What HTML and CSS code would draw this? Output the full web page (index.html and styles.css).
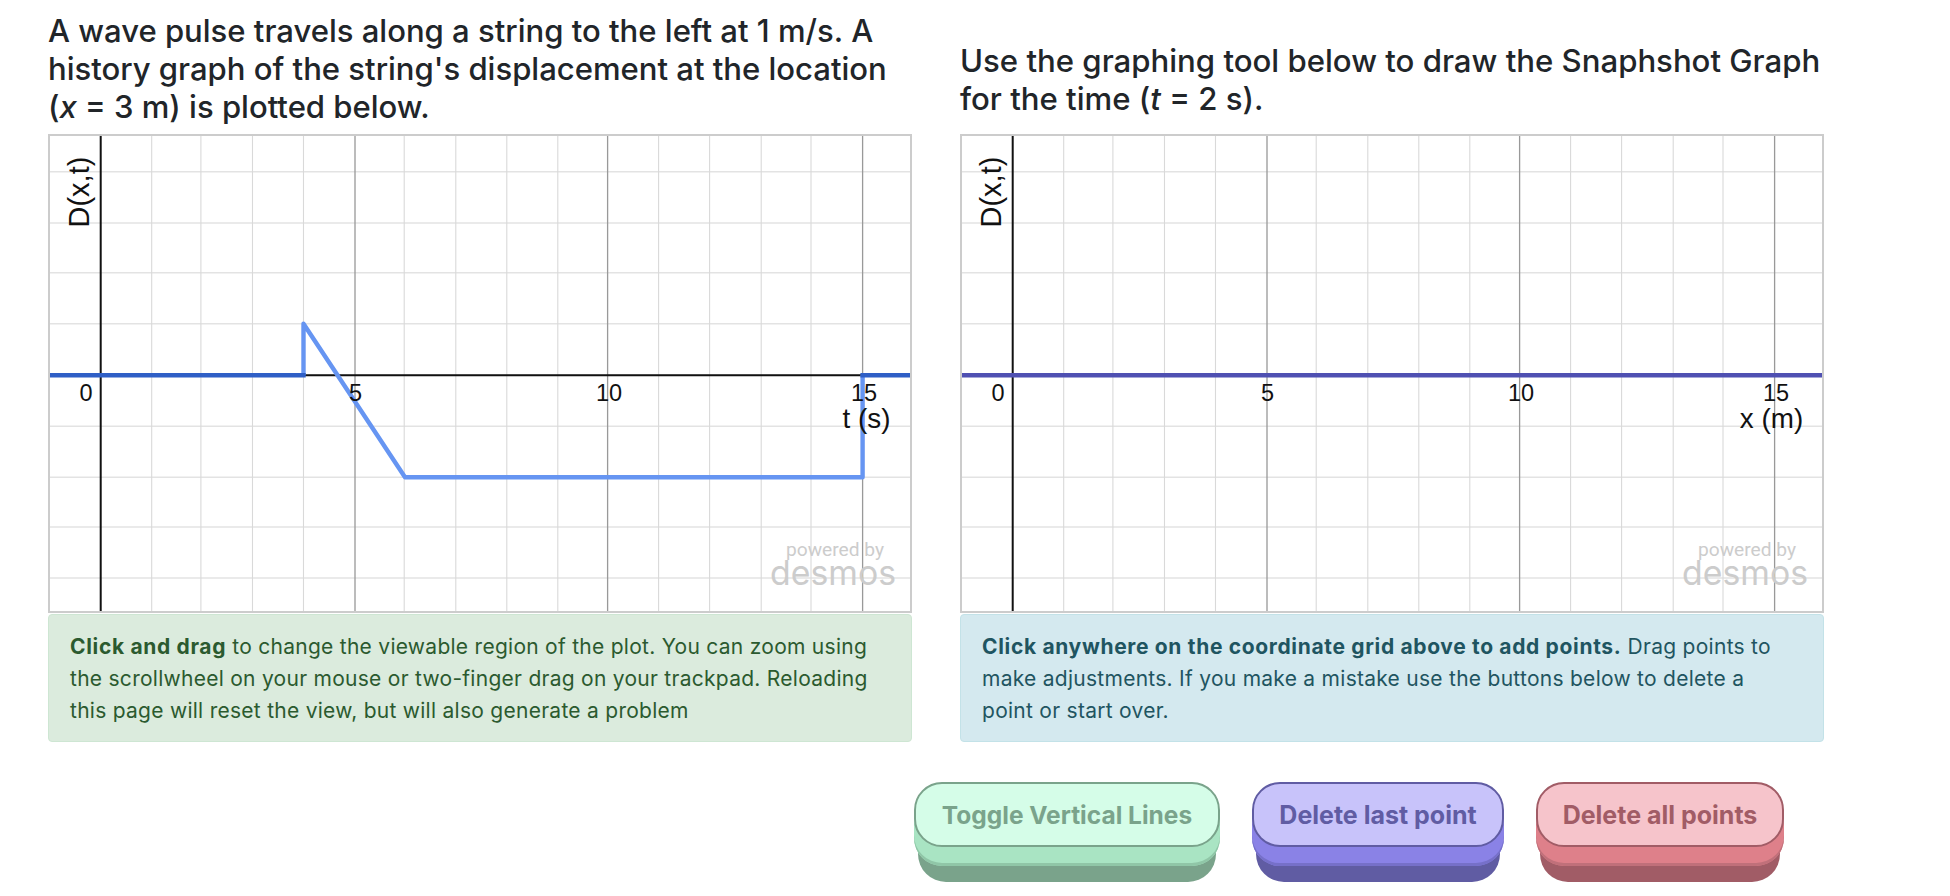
FILE: index.html
```html
<!DOCTYPE html>
<html lang="en">
<head>
<meta charset="utf-8">
<title>Snapshot Graph</title>
<link rel="stylesheet" href="styles.css">
</head>
<body>
<svg class="defs" width="0" height="0" aria-hidden="true">
  <defs>
    <g id="grid">
      <path class="minor-h" d="M-1 36.7H864M-1 88H864M-1 137.7H864M-1 188.7H864M-1 240.3H864M-1 291.3H864M-1 342.3H864M-1 392H864M-1 443H864"/>
      <path class="minor-v" d="M102.7 -1V480M151.9 -1V480M203.5 -1V480M254.5 -1V480M355.2 -1V480M406.8 -1V480M457.8 -1V480M508.8 -1V480M609.6 -1V480M660.6 -1V480M712.2 -1V480M762 -1V480"/>
      <path class="major-v" d="M306 -1V480M558.6 -1V480M813.6 -1V480"/>
      <path class="axis" d="M51.7 -1V480M-1 240.3H864"/>
    </g>
    <g id="brand">
      <text class="powered" x="737" y="421" textLength="98" lengthAdjust="spacingAndGlyphs">powered by</text>
      <text class="desmos" x="721" y="449.5" textLength="126" lengthAdjust="spacingAndGlyphs">desmos</text>
    </g>
  </defs>
</svg>
<main class="page">
  <section class="columns">
    <h1 class="prompt">A wave pulse travels along a string to the left at 1 m/s. A history graph of the string's displacement at the location (<i>x</i> = 3 m) is plotted below.</h1>
    <h1 class="prompt prompt-right">Use the graphing tool below to draw the Snaphshot Graph for the time (<i>t</i> = 2 s).</h1>

    <div class="graph">
      <svg viewBox="-1 -1 864 479" width="864" height="479">
        <use href="#grid"/>
        <path class="trace history" d="M254.5 240.3V188.7L356 342.3H813.6V240.3"/>
        <path class="trace on-axis" d="M-1 240.3H256.7M811.4 240.3H863"/>
        <text class="ylabel" transform="translate(40 92.5) rotate(-90)">D(x,t)</text>
        <text class="tick" x="37" y="266">0</text>
        <text class="tick" x="306.5" y="266">5</text>
        <text class="tick" x="560" y="266">10</text>
        <text class="tick" x="815" y="266">15</text>
        <text class="xlabel" x="817.5" y="293">t (s)</text>
        <use href="#brand"/>
      </svg>
    </div>
    <div class="graph">
      <svg viewBox="-1 -1 864 479" width="864" height="479">
        <use href="#grid"/>
        <path class="trace snapshot" d="M-1 240.3H863"/>
        <text class="ylabel" transform="translate(40 92.5) rotate(-90)">D(x,t)</text>
        <text class="tick" x="37" y="266">0</text>
        <text class="tick" x="306.5" y="266">5</text>
        <text class="tick" x="560" y="266">10</text>
        <text class="tick" x="815" y="266">15</text>
        <text class="xlabel" x="810.5" y="293">x (m)</text>
        <use href="#brand"/>
      </svg>
    </div>

    <p class="note note-green"><b>Click and drag</b> to change the viewable region of the plot. You can zoom using the scrollwheel on your mouse or two-finger drag on your trackpad. Reloading this page will reset the view, but will also generate a problem</p>
    <p class="note note-blue"><b>Click anywhere on the coordinate grid above to add points.</b> Drag points to make adjustments. If you make a mistake use the buttons below to delete a point or start over.</p>
  </section>

  <div class="actions">
    <button class="push push-green" type="button"><span class="front">Toggle Vertical Lines</span></button>
    <button class="push push-purple" type="button"><span class="front">Delete last point</span></button>
    <button class="push push-red" type="button"><span class="front">Delete all points</span></button>
  </div>
</main>
</body>
</html>
```

FILE: styles.css
```css
* { box-sizing: border-box; }
html, body { margin: 0; padding: 0; background: #fff; }
body {
  font-family: Inter, "Liberation Sans", sans-serif;
  color: #212529;
  overflow: hidden;
}
.defs { position: absolute; }
.page { width: 1950px; height: 896px; padding: 12px 126px 0 48px; }

.columns {
  display: grid;
  grid-template-columns: 864px 864px;
  column-gap: 48px;
  align-items: end;
}
.prompt {
  margin: 0 0 8px;
  font-size: 31.05px;
  font-weight: 500;
  line-height: 38px;
}
.prompt-right { margin-bottom: 16px; font-size: 31.15px; }

.graph {
  width: 864px;
  height: 479px;
  outline: 2px solid #ccc;
  outline-offset: -2px;
}
.graph svg { display: block; }
.minor-h { stroke: #e3e3e3; stroke-width: 1.6; fill: none; }
.minor-v { stroke: #d9d9d9; stroke-width: 1.1; fill: none; }
.major-v { stroke: #999; stroke-width: 1.3; fill: none; }
.axis { stroke: #111; stroke-width: 2; fill: none; }
.trace { fill: none; stroke-width: 4.4; stroke-linejoin: round; }
.history { stroke: #6695f2; }
.on-axis { stroke: #2f5fc6; }
.snapshot { stroke: #4f50b2; }
.tick, .xlabel, .ylabel { font-family: "Liberation Sans", Arial, sans-serif; fill: #111; }
.tick { font-size: 23.5px; text-anchor: middle; }
.xlabel { font-size: 27.8px; text-anchor: middle; }
.ylabel { font-size: 29px; }
.powered { font-family: Roboto, sans-serif; font-size: 19px; fill: #ccc; }
.desmos { font-family: Inter, sans-serif; font-size: 34px; fill: #ccc; }

.note {
  margin: 1px 0 0;
  height: 128px;
  padding: 16px 34px 16px 21px;
  font-size: 21px;
  line-height: 32px;
  letter-spacing: .27px;
  border: 1px solid;
  border-radius: 4px;
  align-self: start;
}
.note b { letter-spacing: .66px; }
.note-green { background: #dbebdd; border-color: #cee6d3; color: #2b5a2f; }
.note-blue { background: #d4e9ef; border-color: #c3e2e8; color: #1f5561; }

.actions {
  display: flex;
  gap: 32px;
  margin: 40px 0 0 866px;
}
.push {
  position: relative;
  z-index: 0;
  height: 65px;
  padding: 0;
  border: 0;
  background: none;
  font: 700 25px Inter, "Liberation Sans", sans-serif;
}
.push-green { width: 306px; font-size: 24.5px; }
.push-purple { width: 252px; }
.push-red { width: 248px; }
.front {
  display: flex;
  align-items: center;
  justify-content: center;
  height: 100%;
  padding-top: 1px;
  border: 2px solid;
  border-radius: 28px;
}
.push::before, .push::after {
  content: "";
  position: absolute;
  border-radius: 28px;
}
.push::before {
  z-index: -1;
  left: 0; right: 0;
  top: 16px; bottom: -19px;
}
.push::after {
  z-index: -2;
  left: 4px; right: 4px;
  top: 26px; bottom: -35px;
}
.push-green .front { background: #d5fde8; border-color: #7aa38b; color: #7aa38b; }
.push-green::before { background: #a9e4c3; box-shadow: inset 0 -3px 0 #90c6a7; }
.push-green::after { background: #7aa38b; }
.push-purple .front { background: #c8c3fa; border-color: #605ca3; color: #605ca3; }
.push-purple::before { background: #8a82e6; box-shadow: inset 0 -3px 0 #7670c9; }
.push-purple::after { background: #605ca3; }
.push-red .front { background: #f6c4cb; border-color: #a15c66; color: #a15c66; }
.push-red::before { background: #de808a; box-shadow: inset 0 -3px 0 #c0707a; }
.push-red::after { background: #a15c66; }
```
